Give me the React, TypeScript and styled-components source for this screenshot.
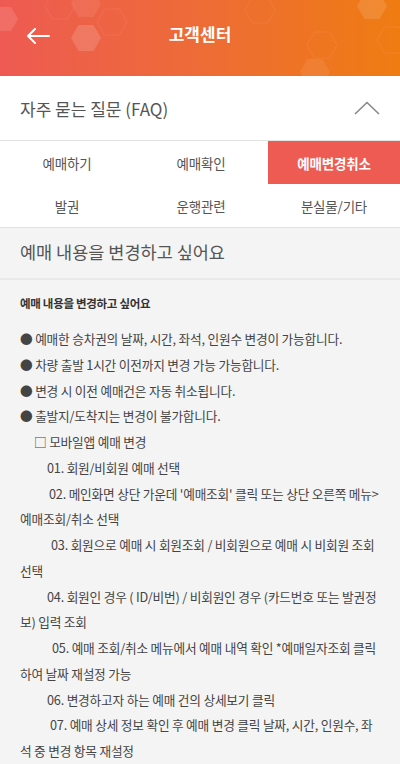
import * as React from 'react';
import styled, { createGlobalStyle } from 'styled-components';

const GlobalStyle = createGlobalStyle`
  html, body {
    margin: 0;
    padding: 0;
    background: #f4f4f4;
  }
  body {
    font-family: "Noto Sans CJK KR", "Noto Sans", sans-serif;
    -webkit-font-smoothing: antialiased;
  }
`;

const Page = styled.div`
  width: 400px;
  min-height: 764px;
  background: #f4f4f4;
  overflow: hidden;
`;

const Header = styled.header`
  position: relative;
  height: 76px;
  box-sizing: border-box;
  padding-bottom: 9px;
  background: linear-gradient(90deg, #ee5a52 0%, #ed6a3a 45%, #ef7c12 100%);
  display: flex;
  align-items: center;
  justify-content: center;
  overflow: hidden;
`;

const Pattern = styled.svg`
  position: absolute;
  inset: 0;
  pointer-events: none;
`;

const BackButton = styled.button`
  position: absolute;
  left: 24px;
  top: 25px;
  width: 28px;
  height: 22px;
  padding: 0;
  border: 0;
  background: none;
  display: flex;
  align-items: center;
  justify-content: center;
`;

const Title = styled.h1`
  position: relative;
  margin: 0;
  color: #fff;
  font-size: 17px;
  font-weight: 700;
`;

const FaqBar = styled.div`
  height: 64px;
  background: #fff;
  display: flex;
  align-items: center;
  justify-content: space-between;
  padding: 0 20px;
  border-bottom: 1px solid #e2e2e2;
`;

const FaqTitle = styled.h2`
  margin: 0;
  font-size: 17px;
  font-weight: 400;
  color: #555;
`;

const Tabs = styled.div`
  display: grid;
  grid-template-columns: 134px 134px 1fr;
  grid-auto-rows: 43px;
  background: #fff;
  border-bottom: 1px solid #e2e2e2;
`;

const Tab = styled.div<{ $active?: boolean }>`
  display: flex;
  align-items: center;
  justify-content: center;
  font-size: 13.5px;
  letter-spacing: -0.2px;
  color: ${(p) => (p.$active ? '#fff' : '#555')};
  font-weight: ${(p) => (p.$active ? 700 : 400)};
  background: ${(p) => (p.$active ? '#ee5b52' : 'transparent')};
`;

const Question = styled.div`
  height: 52px;
  box-sizing: border-box;
  padding: 0 20px 3px;
  display: flex;
  align-items: center;
  border-bottom: 2px solid #e9e9e9;
  font-size: 17.5px;
  color: #555;
`;

const Answer = styled.div`
  padding: 13px 20px 20px;
  color: #444;
`;

const Summary = styled.p`
  margin: 0 0 13px;
  font-size: 11.5px;
  font-weight: 700;
  color: #333;
  letter-spacing: -0.3px;
  line-height: 20px;
`;

const Line = styled.p<{ $indent?: number }>`
  margin: 0;
  font-size: 12.7px;
  line-height: 25.75px;
  letter-spacing: -0.2px;
  text-indent: ${(p) => p.$indent ?? 0}px;
  word-break: break-all;
`;

const Hexes = () => {
  const hex = (cx: number, cy: number, r: number) =>
    [0, 60, 120, 180, 240, 300]
      .map((a) => {
        const rad = (a * Math.PI) / 180;
        return `${(cx + r * Math.cos(rad)).toFixed(1)},${(cy + r * Math.sin(rad)).toFixed(1)}`;
      })
      .join(' ');
  const filled: [number, number, number, number][] = [
    [4, 19, 14, 0.12],
    [86, 4, 15, 0.08],
    [86, 38, 15, 0.15],
    [372, 6, 15, 0.12],
    [315, 72, 15, 0.08],
  ];
  const outlined: [number, number, number][] = [
    [60, 6, 15],
    [112, 22, 15],
    [260, 10, 15],
    [322, 45, 15],
    [392, 40, 15],
  ];
  return (
    <Pattern width="400" height="76" viewBox="0 0 400 76">
      {filled.map(([x, y, r, o], i) => (
        <polygon key={`f${i}`} points={hex(x, y, r)} fill="#fff" fillOpacity={o} />
      ))}
      {outlined.map(([x, y, r], i) => (
        <polygon
          key={`o${i}`}
          points={hex(x, y, r)}
          fill="none"
          stroke="#fff"
          strokeOpacity={0.07}
          strokeWidth={1}
        />
      ))}
    </Pattern>
  );
};

const tabs = ['예매하기', '예매확인', '예매변경취소', '발권', '운행관련', '분실물/기타'];

const lines: { text: string; indent?: number }[] = [
  { text: '● 예매한 승차권의 날짜, 시간, 좌석, 인원수 변경이 가능합니다.' },
  { text: '● 차량 출발 1시간 이전까지 변경 가능 가능합니다.' },
  { text: '● 변경 시 이전 예매건은 자동 취소됩니다.' },
  { text: '● 출발지/도착지는 변경이 불가합니다.' },
  { text: '□ 모바일앱 예매 변경', indent: 14 },
  { text: '01. 회원/비회원 예매 선택', indent: 27 },
  { text: "02. 메인화면 상단 가운데 '예매조회' 클릭 또는 상단 오른쪽 메뉴> 예매조회/취소 선택", indent: 29 },
  { text: '03. 회원으로 예매 시 회원조회 / 비회원으로 예매 시 비회원 조회 선택', indent: 31 },
  { text: '04. 회원인 경우 ( ID/비번) / 비회원인 경우 (카드번호 또는 발권정보) 입력 조회', indent: 27 },
  { text: '05. 예매 조회/취소 메뉴에서 예매 내역 확인 *예매일자조회 클릭 하여 날짜 재설정 가능', indent: 32 },
  { text: '06. 변경하고자 하는 예매 건의 상세보기 클릭', indent: 27 },
  { text: '07. 예매 상세 정보 확인 후 예매 변경 클릭 날짜, 시간, 인원수, 좌석 중 변경 항목 재설정', indent: 30 },
];

export default function App() {
  return (
    <Page>
      <GlobalStyle />
      <Header>
        <Hexes />
        <BackButton aria-label="뒤로">
          <svg width="24" height="16" viewBox="0 0 24 16" fill="none">
            <path d="M23 8H2M9 1L2 8l7 7" stroke="#fff" strokeWidth="2" strokeLinecap="round" strokeLinejoin="round" />
          </svg>
        </BackButton>
        <Title>고객센터</Title>
      </Header>
      <FaqBar>
        <FaqTitle>자주 묻는 질문 (FAQ)</FaqTitle>
        <svg width="26" height="14" viewBox="0 0 26 14" fill="none">
          <path d="M1 13L13 1.5 25 13" stroke="#888" strokeWidth="1.6" />
        </svg>
      </FaqBar>
      <Tabs>
        {tabs.map((t) => (
          <Tab key={t} $active={t === '예매변경취소'}>
            {t}
          </Tab>
        ))}
      </Tabs>
      <Question>예매 내용을 변경하고 싶어요</Question>
      <Answer>
        <Summary>예매 내용을 변경하고 싶어요</Summary>
        {lines.map((l, i) => (
          <Line key={i} $indent={l.indent}>
            {l.text}
          </Line>
        ))}
      </Answer>
    </Page>
  );
}
